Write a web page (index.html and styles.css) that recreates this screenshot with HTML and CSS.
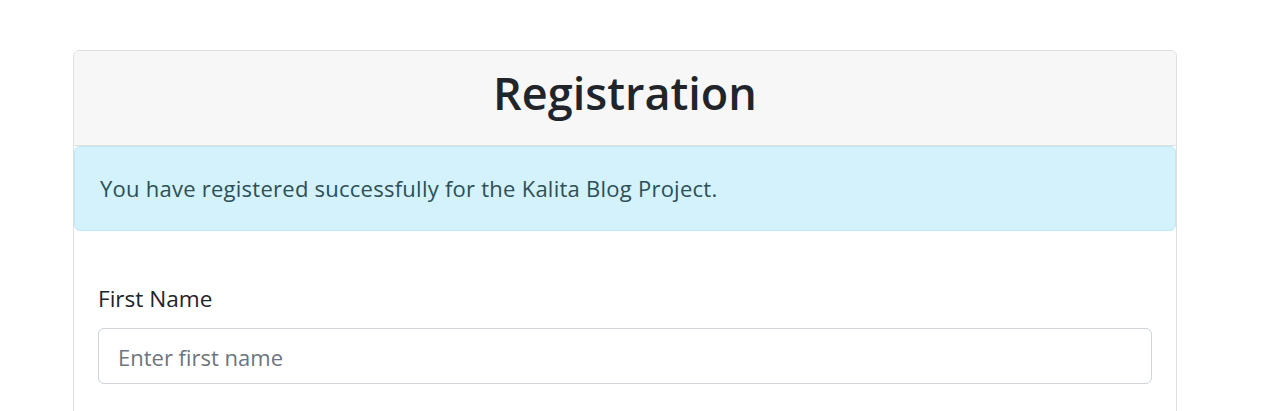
FILE: index.html
```html
<!DOCTYPE html>
<html lang="en">
<head>
<meta charset="utf-8">
<title>Registration</title>
<link rel="stylesheet" href="styles.css">
</head>
<body>
  <main class="page">
    <section class="card">
      <header class="card-header">
        <h1 class="card-title">Registration</h1>
      </header>
      <div class="alert" role="alert">You have registered successfully for the Kalita Blog Project.</div>
      <form class="card-body">
        <div class="field">
          <label class="field-label" for="firstName">First Name</label>
          <input class="field-input" id="firstName" type="text" placeholder="Enter first name">
        </div>
      </form>
    </section>
  </main>
</body>
</html>
```

FILE: styles.css
```css
* { box-sizing: border-box; }

html, body {
  margin: 0;
  padding: 0;
  background: #ffffff;
}

body {
  font-family: "Open Sans", "Noto Sans", "Liberation Sans", sans-serif;
  color: #212529;
}

.page {
  padding: 50px 97px 0 73px;
}

.card {
  border: 1px solid #dfdfdf;
  border-radius: 6px;
  background: #ffffff;
}

.card-header {
  background: #f7f7f7;
  border-bottom: 1px solid #dfdfdf;
  border-radius: 5px 5px 0 0;
  padding: 14px 0 24px;
  text-align: center;
}

.card-title {
  margin: 0;
  font-size: 45px;
  line-height: 56px;
  font-weight: 600;
  color: #212529;
}

.alert {
  background: #d3f2fb;
  border: 1px solid #bfe9f5;
  border-radius: 6px;
  color: #2c4f58;
  font-size: 22px;
  letter-spacing: 0.25px;
  line-height: 28px;
  padding: 27px 25px 28px;
}

.card-body {
  padding: 53px 24px 24px;
}

.field {
  display: flex;
  flex-direction: column;
  gap: 14px;
  margin-bottom: 28px;
}

.field-label {
  font-size: 22.6px;
  line-height: 30px;
  color: #212529;
}

.field-input {
  height: 56px;
  width: 100%;
  border: 1px solid #ced4da;
  border-radius: 6px;
  padding: 2px 19px 0;
  font-family: inherit;
  font-size: 22px;
  color: #212529;
  background: #ffffff;
  outline: none;
}

.field-input::placeholder {
  color: #6c757d;
  opacity: 1;
}
```
